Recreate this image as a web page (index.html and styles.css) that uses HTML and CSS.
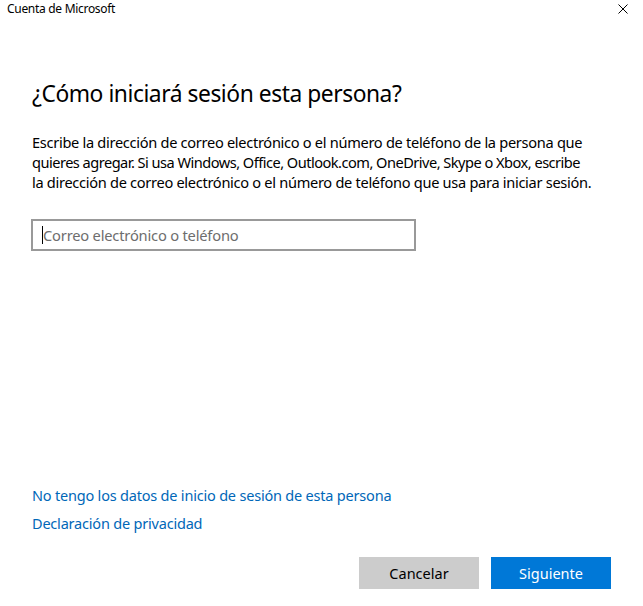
FILE: index.html
```html
<!DOCTYPE html>
<html lang="es">
<head>
<meta charset="utf-8">
<title>Cuenta de Microsoft</title>
<link rel="stylesheet" href="styles.css">
</head>
<body>
<div class="window">
  <div class="titlebar">
    <span class="title">Cuenta de Microsoft</span>
    <span class="close" aria-label="Cerrar">
      <svg width="10" height="10" viewBox="0 0 10 10"><path d="M0.5 0.5 L9.5 9.5 M9.5 0.5 L0.5 9.5" stroke="#000" stroke-width="1" fill="none"/></svg>
    </span>
  </div>
  <div class="content">
    <h1 class="heading">¿Cómo iniciará sesión esta persona?</h1>
    <p class="desc">Escribe la dirección de correo electrónico o el número de teléfono de la persona que<br><span class="tight">quieres agregar. Si usa Windows, Office, Outlook.com, OneDrive, Skype o Xbox, escribe</span><br>la dirección de correo electrónico o el número de teléfono que usa para iniciar sesión.</p>
    <div class="field"><span class="caret"></span><span class="placeholder">Correo electrónico o teléfono</span></div>
    <div class="spacer"></div>
    <div class="links">
      <a class="link" href="#">No tengo los datos de inicio de sesión de esta persona</a>
      <a class="link" href="#">Declaración de privacidad</a>
    </div>
  </div>
  <div class="footer">
    <button class="btn btn-secondary">Cancelar</button>
    <button class="btn btn-primary">Siguiente</button>
  </div>
</div>
</body>
</html>
```
FILE: styles.css
```css
html, body {
  margin: 0;
  padding: 0;
  background: #fff;
}
body {
  font-family: "Noto Sans", "Open Sans", sans-serif;
  color: #000;
}
.window {
  width: 643px;
  height: 606px;
  display: flex;
  flex-direction: column;
}
.titlebar {
  height: 30px;
  display: flex;
  align-items: flex-start;
  justify-content: space-between;
  padding: 0 15px 0 7px;
}
.title {
  font-size: 12px;
  line-height: 18px;
  letter-spacing: -0.3px;
}
.close {
  display: flex;
  padding-top: 4px;
}
.content {
  flex: 1;
  display: flex;
  flex-direction: column;
  padding: 48px 32px 0 32px;
}
.heading {
  margin: 0;
  font-weight: normal;
  font-size: 22.8px;
  line-height: 32px;
  letter-spacing: -0.45px;
  color: #000;
}
.desc {
  margin: 22px 0 0 0;
  font-size: 14.6px;
  line-height: 20px;
  white-space: nowrap;
  letter-spacing: -0.3px;
  color: #000;
}
.tight {
  letter-spacing: -0.52px;
}
.field {
  margin-top: 27px;
  width: 372px;
  height: 28px;
  border: 2px solid #999;
  display: flex;
  align-items: center;
  padding-left: 9px;
  box-sizing: content-box;
  margin-left: -1px;
}
.caret {
  width: 1px;
  height: 18px;
  background: #000;
}
.placeholder {
  font-size: 14.7px;
  color: #6d6d6d;
  letter-spacing: -0.2px;
}
.spacer {
  flex: 1;
}
.links {
  display: flex;
  flex-direction: column;
  gap: 8px;
  padding-bottom: 24px;
}
.link {
  font-size: 14.5px;
  line-height: 20px;
  color: #0067b8;
  text-decoration: none;
  letter-spacing: -0.2px;
}
.footer {
  display: flex;
  justify-content: flex-end;
  gap: 12px;
  padding: 0 32px 17px 0;
}
.btn {
  width: 120px;
  height: 32px;
  border: none;
  font-family: "Noto Sans", "Open Sans", sans-serif;
  font-size: 14.5px;
  padding: 0;
}
.btn-secondary {
  background: #cccccc;
  color: #000;
}
.btn-primary {
  background: #0078d7;
  color: #fff;
}
```
